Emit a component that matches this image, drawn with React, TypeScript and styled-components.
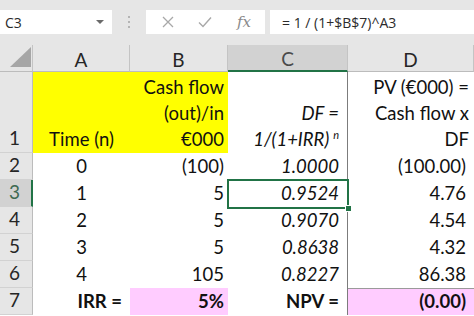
import * as React from 'react';
import styled, { createGlobalStyle, css } from 'styled-components';

const GlobalStyle = createGlobalStyle`
  html, body {
    margin: 0;
    padding: 0;
    background: #ffffff;
    overflow: hidden;
  }
  body {
    font-family: Lato, "Open Sans", sans-serif;
  }
`;

const Wrapper = styled.div`
  width: 474px;
  height: 316px;
  overflow: hidden;
  background: #ffffff;
`;

const Toolbar = styled.div`
  height: 45px;
  background: #e6e6e6;
  display: flex;
  align-items: flex-start;
  padding-top: 10px;
  box-sizing: border-box;
`;

const NameBox = styled.div`
  width: 112px;
  height: 24px;
  background: #ffffff;
  display: flex;
  align-items: center;
  justify-content: space-between;
  padding: 0 8px 0 5px;
  box-sizing: border-box;
  font-family: "Open Sans", Lato, sans-serif;
  font-size: 14px;
  color: #2b2b2b;
`;

const Caret = styled.span`
  width: 0;
  height: 0;
  border-left: 4px solid transparent;
  border-right: 4px solid transparent;
  border-top: 4px solid #6a6a6a;
`;

const Grip = styled.div`
  width: 34px;
  height: 24px;
  display: flex;
  flex-direction: column;
  align-items: center;
  justify-content: center;
  gap: 3px;

  span {
    width: 2px;
    height: 2px;
    background: #b4b4b4;
  }
`;

const ButtonBox = styled.div`
  width: 119px;
  height: 24px;
  background: #ffffff;
  display: flex;
  align-items: center;
  padding-left: 15px;
  box-sizing: border-box;
  gap: 22px;
`;

const FxLabel = styled.span`
  font-family: "DejaVu Serif", "Liberation Serif", serif;
  font-style: italic;
  font-size: 15px;
  color: #8a8a8a;
  margin-left: 2px;
`;

const FormulaBox = styled.div`
  flex: 1;
  height: 24px;
  margin-left: 5px;
  background: #ffffff;
  display: flex;
  align-items: center;
  padding-left: 12px;
  font-family: "Open Sans", Lato, sans-serif;
  font-size: 14px;
  color: #2b2b2b;
  white-space: pre;
`;

const Sheet = styled.div`
  display: grid;
  grid-template-columns: 33px 97px 98px 120px 126px;
  grid-template-rows: 27px 81px repeat(6, 27px);
  font-family: Lato, "Open Sans", sans-serif;
  font-size: 18.5px;
  color: #111111;
`;

const Corner = styled.div`
  background: #e6e6e6;
  border-right: 1px solid #c4c4c4;
  border-bottom: 1px solid #bcbcbc;
  display: flex;
  align-items: flex-end;
  justify-content: flex-end;
  padding: 0 1px 4px 0;
`;

const ColHead = styled.div<{ $active?: boolean }>`
  background: #e6e6e6;
  border-right: 1px solid #c4c4c4;
  border-bottom: 1px solid #bcbcbc;
  display: flex;
  align-items: center;
  justify-content: center;
  font-size: 19px;
  color: #262626;
  padding-top: 2px;
  box-sizing: border-box;
  ${({ $active }) =>
    $active &&
    css`
      background: #d2d2d2;
      color: #4a4a4a;
      border-bottom: 2px solid #217346;
    `}
`;

const RowHead = styled.div<{ $active?: boolean }>`
  background: #e6e6e6;
  border-right: 1px solid #bcbcbc;
  border-bottom: 1px solid #d2d2d2;
  display: flex;
  align-items: flex-end;
  padding: 0 0 2px 9px;
  box-sizing: border-box;
  font-size: 19px;
  line-height: 24px;
  color: #262626;
  ${({ $active }) =>
    $active &&
    css`
      background: #d2d2d2;
      color: #3f6a52;
      border-right: 2px solid #217346;
    `}
`;

type Align = 'left' | 'center' | 'right';

const Cell = styled.div<{
  $align?: Align;
  $fill?: string;
  $italic?: boolean;
  $bold?: boolean;
  $pad?: number;
  $rule?: boolean;
  $topRule?: boolean;
}>`
  position: relative;
  background: ${({ $fill }) => $fill || '#ffffff'};
  display: flex;
  flex-direction: column;
  justify-content: flex-end;
  align-items: ${({ $align }) =>
    $align === 'center' ? 'center' : $align === 'left' ? 'flex-start' : 'flex-end'};
  text-align: ${({ $align }) => $align || 'right'};
  padding: 0 ${({ $pad }) => $pad ?? 4}px 1px 4px;
  box-sizing: border-box;
  line-height: 26px;
  white-space: nowrap;
  font-style: ${({ $italic }) => ($italic ? 'italic' : 'normal')};
  font-weight: ${({ $bold }) => ($bold ? 700 : 400)};
  border-right: ${({ $rule }) => ($rule ? '1px solid #7c7c7c' : 'none')};
  border-top: ${({ $topRule }) => ($topRule ? '1px solid #9a9a9a' : 'none')};
`;

const Sup = styled.sup`
  font-size: 11px;
  line-height: 0;
  margin-left: 4px;
  vertical-align: 7px;
`;

// active-cell outline with the fill handle, drawn over the neighbouring cells
const Selection = styled.div`
  position: absolute;
  z-index: 5;
  left: -1px;
  top: -1px;
  right: -2px;
  bottom: -2px;
  border: 2px solid #217346;
  pointer-events: none;

  &::after {
    content: '';
    position: absolute;
    right: -5px;
    bottom: -5px;
    width: 5px;
    height: 5px;
    background: #217346;
    border: 1px solid #ffffff;
  }
`;

const YELLOW = '#ffff00';
const PINK = '#ffccff';

const rows = [
  { n: 2, t: '0', cf: '(100)', df: '1.0000', pv: '(100.00)' },
  { n: 3, t: '1', cf: '5', df: '0.9524', pv: '4.76' },
  { n: 4, t: '2', cf: '5', df: '0.9070', pv: '4.54' },
  { n: 5, t: '3', cf: '5', df: '0.8638', pv: '4.32' },
  { n: 6, t: '4', cf: '105', df: '0.8227', pv: '86.38' },
];

function CrossIcon() {
  return (
    <svg width="14" height="14" viewBox="0 0 14 14">
      <path d="M2 2 L12 12 M12 2 L2 12" stroke="#a8a8a8" strokeWidth="1.3" fill="none" />
    </svg>
  );
}

function CheckIcon() {
  return (
    <svg width="16" height="14" viewBox="0 0 16 14">
      <path d="M2 7.5 L6 11.5 L14 2.5" stroke="#a8a8a8" strokeWidth="1.4" fill="none" />
    </svg>
  );
}

function SelectAll() {
  return (
    <svg width="21" height="20" viewBox="0 0 21 20">
      <polygon points="21,0 21,20 0,20" fill="#a6a6a6" />
    </svg>
  );
}

function App() {
  return (
    <Wrapper>
      <GlobalStyle />
      <Toolbar>
        <NameBox>
          C3
          <Caret />
        </NameBox>
        <Grip>
          <span />
          <span />
          <span />
        </Grip>
        <ButtonBox>
          <CrossIcon />
          <CheckIcon />
          <FxLabel>fx</FxLabel>
        </ButtonBox>
        <FormulaBox>= 1 / (1+$B$7)^A3</FormulaBox>
      </Toolbar>
      <Sheet>
        <Corner>
          <SelectAll />
        </Corner>
        <ColHead>A</ColHead>
        <ColHead>B</ColHead>
        <ColHead $active>C</ColHead>
        <ColHead>D</ColHead>

        <RowHead>1</RowHead>
        <Cell $align="center" $fill={YELLOW}>
          Time (n)
        </Cell>
        <Cell $fill={YELLOW}>
          <span>Cash flow</span>
          <span>(out)/in</span>
          <span>€000</span>
        </Cell>
        <Cell $italic $pad={8} $rule>
          <span>DF =</span>
          <span>
            1/(1+IRR)
            <Sup>n</Sup>
          </span>
        </Cell>
        <Cell $pad={5}>
          <span>PV (€000) =</span>
          <span>Cash flow x</span>
          <span>DF</span>
        </Cell>

        {rows.map((row) => (
          <React.Fragment key={row.n}>
            <RowHead $active={row.n === 3}>{row.n}</RowHead>
            <Cell $align="center">{row.t}</Cell>
            <Cell>{row.cf}</Cell>
            <Cell $italic $pad={8} $rule>
              {row.df}
              {row.n === 3 ? <Selection /> : null}
            </Cell>
            <Cell $pad={8}>{row.pv}</Cell>
          </React.Fragment>
        ))}

        <RowHead>7</RowHead>
        <Cell $bold $pad={8}>
          IRR =
        </Cell>
        <Cell $bold $fill={PINK}>
          5%
        </Cell>
        <Cell $bold $pad={8} $rule>
          NPV =
        </Cell>
        <Cell $bold $pad={8} $fill={PINK} $topRule>
          (0.00)
        </Cell>
      </Sheet>
    </Wrapper>
  );
}

export default App;
